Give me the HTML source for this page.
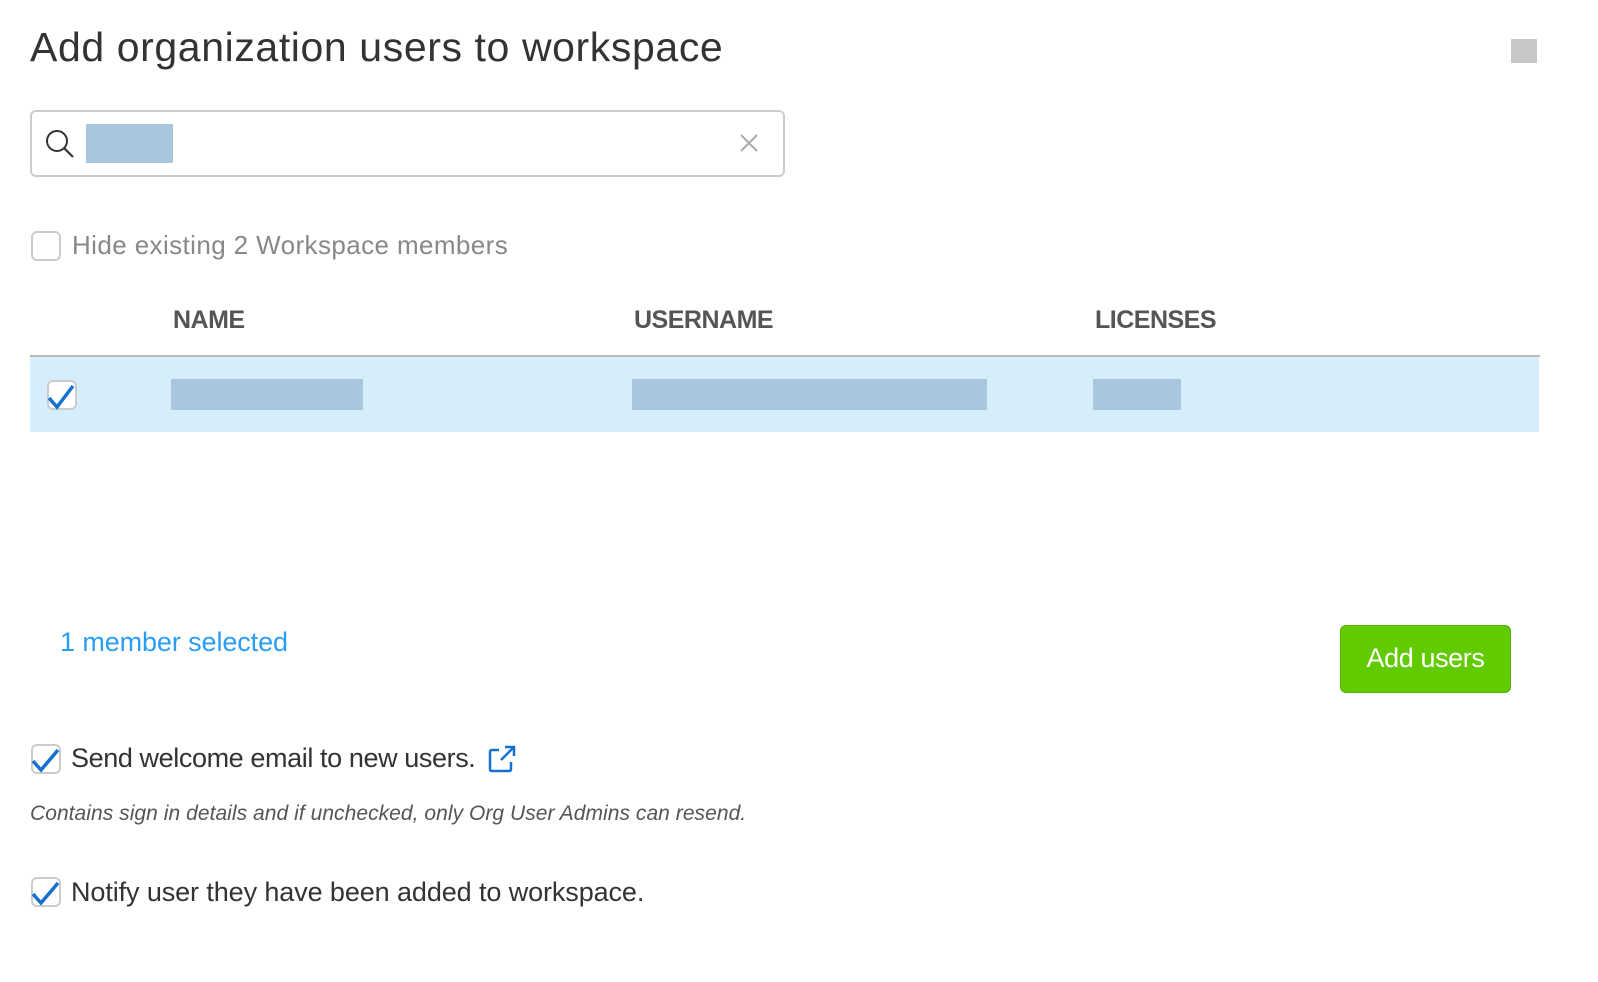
<!DOCTYPE html>
<html><head><meta charset="utf-8"><style>
body{margin:0;width:1598px;height:982px;background:#fff;font-family:"Liberation Sans",sans-serif;position:relative;overflow:hidden;color:#333}
.a{position:absolute;white-space:nowrap}
.cb{position:absolute;width:28px;height:28px;border:2px solid #ccc;border-radius:6px;box-sizing:border-box;background:#fff}
.blk{position:absolute;background:#a8c7de}
</style></head><body>
<div class="a" style="left:30px;top:24px;font-size:41px;color:#333;letter-spacing:0.6px">Add organization users to workspace</div>
<div class="a" style="left:1511px;top:39px;width:26px;height:24px;background:#c8c8c8"></div>
<div class="a" style="left:30px;top:110px;width:755px;height:67px;border:2px solid #ccc;border-radius:6px;box-sizing:border-box"></div>
<svg class="a" style="left:44px;top:128px" width="32" height="32" viewBox="0 0 32 32"><circle cx="13" cy="13" r="10" fill="none" stroke="#333" stroke-width="2"/><line x1="20" y1="20" x2="29" y2="29" stroke="#333" stroke-width="2.2"/></svg>
<div class="blk" style="left:86px;top:124px;width:87px;height:39px;border-radius:0"></div>
<svg class="a" style="left:739px;top:133px" width="20" height="20" viewBox="0 0 20 20"><path d="M2 2L18 18M18 2L2 18" stroke="#aaa" stroke-width="2"/></svg>
<div class="cb" style="left:31px;top:231px;width:30px;height:30px"></div>
<div class="a" style="left:72px;top:230px;font-size:26px;color:#888;letter-spacing:0.4px">Hide existing 2 Workspace members</div>
<div class="a" style="left:173px;top:306px;font-size:25px;font-weight:bold;color:#555;letter-spacing:-0.5px">NAME</div>
<div class="a" style="left:634px;top:306px;font-size:25px;font-weight:bold;color:#555;letter-spacing:-0.5px">USERNAME</div>
<div class="a" style="left:1095px;top:306px;font-size:25px;font-weight:bold;color:#555;letter-spacing:-0.5px">LICENSES</div>
<div class="a" style="left:30px;top:355px;width:1510px;height:2px;background:#bbb"></div>
<div class="a" style="left:30px;top:357px;width:1509px;height:75px;background:#d6edfc"></div>
<div class="cb" style="left:47px;top:380px;width:30px;height:30px"></div>
<svg class="a" style="left:47px;top:380px" width="30" height="30" viewBox="0 0 30 30"><path d="M2 18L10 27L26 6" fill="none" stroke="#1570d0" stroke-width="3.5"/></svg>
<div class="blk" style="left:171px;top:379px;width:192px;height:31px"></div>
<div class="blk" style="left:632px;top:379px;width:355px;height:31px"></div>
<div class="blk" style="left:1093px;top:379px;width:88px;height:31px"></div>
<div class="a" style="left:60px;top:627px;font-size:27px;color:#2a9df4;letter-spacing:-0.1px">1 member selected</div>
<div class="a" style="left:1340px;top:625px;width:171px;height:68px;background:#62cb00;border-radius:6px;border:1px solid #55b000;box-sizing:border-box;color:#fff;font-size:27px;text-align:center;line-height:64px;letter-spacing:-0.4px">Add users</div>
<div class="cb" style="left:31px;top:744px;width:30px;height:30px"></div>
<svg class="a" style="left:31px;top:744px" width="30" height="30" viewBox="0 0 30 30"><path d="M2 17L10 26L27 6" fill="none" stroke="#1570d0" stroke-width="3.5"/></svg>
<div class="a" style="left:71px;top:743px;font-size:27px;color:#333;letter-spacing:-0.4px">Send welcome email to new users.</div>
<svg class="a" style="left:488px;top:744px" width="30" height="30" viewBox="0 0 30 30"><path d="M11 6H4Q2 6 2 8V25Q2 27 4 27H21Q23 27 23 25V18" fill="none" stroke="#1570d0" stroke-width="2.5"/><path d="M13 16L25 4M17 3H26V12" fill="none" stroke="#1570d0" stroke-width="2.5"/></svg>
<div class="a" style="left:30px;top:802px;font-size:21px;font-style:italic;color:#555;letter-spacing:0.05px">Contains sign in details and if unchecked, only Org User Admins can resend.</div>
<div class="cb" style="left:31px;top:877px;width:30px;height:30px"></div>
<svg class="a" style="left:31px;top:877px" width="30" height="30" viewBox="0 0 30 30"><path d="M2 17L10 26L27 6" fill="none" stroke="#1570d0" stroke-width="3.5"/></svg>
<div class="a" style="left:71px;top:877px;font-size:27px;color:#333;letter-spacing:-0.1px">Notify user they have been added to workspace.</div>
</body></html>
